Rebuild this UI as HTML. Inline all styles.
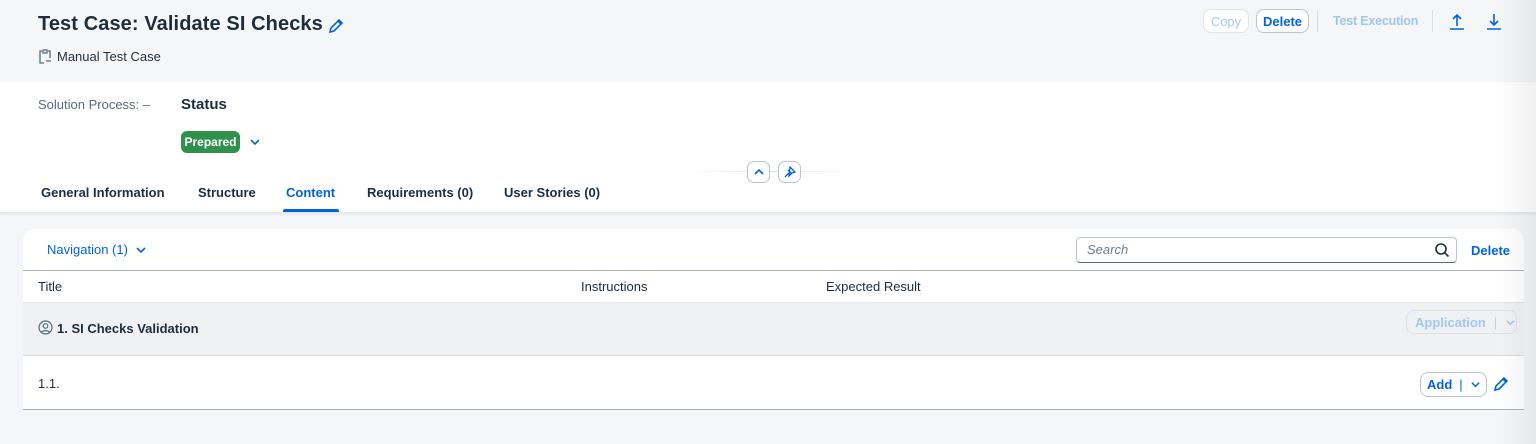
<!DOCTYPE html>
<html><head><style>
*{box-sizing:border-box;margin:0;padding:0}
body{width:1536px;height:444px;overflow:hidden;background:#f5f6f7;font-family:"Liberation Sans",sans-serif;color:#1d2d3e;position:relative}
.a{position:absolute;white-space:nowrap}
.btn{position:absolute;height:24px;border:1px solid #bcc3ca;border-radius:8px;background:#fff;font-size:13px;font-weight:bold;color:#0a6ed1;display:flex;align-items:center;justify-content:center}
</style></head><body>
<div class="a" style="left:0;top:82px;width:1536px;height:130px;background:#fff;box-shadow:0 2px 3px rgba(0,0,0,.08)"></div>
<div class="a" style="left:38px;top:13px;font-size:20px;font-weight:bold;letter-spacing:0.1px">Test Case: Validate SI Checks</div>
<svg class="a" style="left:327px;top:17px" width="18" height="18" viewBox="0 0 18 18"><path d="M3 15l1-4 8-8 3 3-8 8z M11 4l3 3" fill="none" stroke="#0064d9" stroke-width="1.6"/></svg>
<svg class="a" style="left:38px;top:48px" width="14" height="16" viewBox="0 0 14 16"><path d="M4 3H2v12h4M10 3h2v7M5 2h4v3H5z M8 13h5" fill="none" stroke="#556b82" stroke-width="1.3"/></svg>
<div class="a" style="left:57px;top:49px;font-size:13px">Manual Test Case</div>
<div class="btn" style="left:1203px;top:9px;width:46px;color:#a3c8ef;border-color:#e0e4e8;font-weight:normal">Copy</div>
<div class="btn" style="left:1256px;top:9px;width:53px;color:#0064d9">Delete</div>
<div class="a" style="left:1317px;top:10px;width:1px;height:22px;background:#d9dde1"></div>
<div class="a" style="left:1333px;top:14px;font-size:12.5px;font-weight:bold;color:#9fc6ef;letter-spacing:-0.2px">Test Execution</div>
<div class="a" style="left:1432px;top:10px;width:1px;height:22px;background:#d9dde1"></div>
<svg class="a" style="left:1448px;top:12px" width="18" height="18" viewBox="0 0 18 18"><path d="M9 14V3M5 7l4-4 4 4M2 17h14" fill="none" stroke="#0064d9" stroke-width="1.6"/></svg>
<svg class="a" style="left:1485px;top:12px" width="18" height="18" viewBox="0 0 18 18"><path d="M9 2v11M5 9l4 4 4-4M2 17h14" fill="none" stroke="#0064d9" stroke-width="1.6"/></svg>
<div class="a" style="left:38px;top:97px;font-size:13px;color:#556b82">Solution Process: –</div>
<div class="a" style="left:181px;top:96px;font-size:15px;font-weight:bold">Status</div>
<div class="a" style="left:181px;top:131px;width:59px;height:22px;border-radius:6px;background:#30914c;color:#fff;font-size:12px;font-weight:bold;text-align:center;line-height:22px">Prepared</div>
<svg class="a" style="left:249px;top:137px" width="12" height="10" viewBox="0 0 12 10"><path d="M2 3l4 4 4-4" fill="none" stroke="#0064d9" stroke-width="1.6"/></svg>
<div class="a" style="left:690px;top:171px;width:160px;height:1px;background:linear-gradient(90deg,transparent,#d9dde1,transparent)"></div>
<div class="btn" style="left:747px;top:161px;width:23px;height:22px;border-radius:7px"><svg width="12" height="10" viewBox="0 0 12 10"><path d="M2 7l4-4 4 4" fill="none" stroke="#0064d9" stroke-width="1.6"/></svg></div>
<div class="btn" style="left:778px;top:161px;width:23px;height:22px;border-radius:7px"><svg width="12" height="12" viewBox="0 0 12 12"><path d="M1 11l4-4M4 4l4 4M6 1l5 5-3 1-3 3z" fill="none" stroke="#0064d9" stroke-width="1.3"/></svg></div>
<div class="a" style="left:41px;top:185px;font-size:13px;font-weight:bold">General Information</div>
<div class="a" style="left:198px;top:185px;font-size:13px;font-weight:bold">Structure</div>
<div class="a" style="left:286px;top:185px;font-size:13px;font-weight:bold;color:#0064d9">Content</div>
<div class="a" style="left:283px;top:209px;width:56px;height:3px;background:#0064d9;border-radius:2px 2px 0 0"></div>
<div class="a" style="left:367px;top:185px;font-size:13px;font-weight:bold">Requirements (0)</div>
<div class="a" style="left:504px;top:185px;font-size:13px;font-weight:bold">User Stories (0)</div>
<div class="a" style="left:23px;top:229px;width:1501px;height:181px;background:#fff;border-radius:12px 12px 0 0;overflow:hidden">
 <div class="a" style="left:24px;top:13px;font-size:13px;color:#0064d9">Navigation (1)</div>
 <svg class="a" style="left:112px;top:16px" width="12" height="10" viewBox="0 0 12 10"><path d="M2 3l4 4 4-4" fill="none" stroke="#0064d9" stroke-width="1.6"/></svg>
 <div class="a" style="left:1053px;top:8px;width:381px;height:26px;border:1px solid #bcc3ca;border-bottom-color:#556b82;border-radius:4px"></div>
 <div class="a" style="left:1064px;top:13px;font-size:13px;font-style:italic;color:#6a7d90">Search</div>
 <svg class="a" style="left:1411px;top:13px" width="16" height="16" viewBox="0 0 16 16"><circle cx="7" cy="7" r="5" fill="none" stroke="#1d2d3e" stroke-width="1.6"/><path d="M10.5 10.5l4 4" stroke="#1d2d3e" stroke-width="1.6"/></svg>
 <div class="a" style="left:1448px;top:14px;font-size:13px;font-weight:bold;color:#0064d9">Delete</div>
 <div class="a" style="left:0;top:41px;width:1501px;height:1px;background:#a8b2bd"></div>
 <div class="a" style="left:15px;top:50px;font-size:13px">Title</div>
 <div class="a" style="left:558px;top:50px;font-size:13px">Instructions</div>
 <div class="a" style="left:803px;top:50px;font-size:13px">Expected Result</div>
 <div class="a" style="left:0;top:73px;width:1501px;height:54px;background:#eff1f2;border-top:1px solid #e5e5e5;border-bottom:1px solid #d9dde1"></div>
 <svg class="a" style="left:15px;top:91px" width="15" height="15" viewBox="0 0 15 15"><circle cx="7.5" cy="7.5" r="6.5" fill="none" stroke="#556b82" stroke-width="1.2"/><circle cx="7.5" cy="6" r="2.3" fill="none" stroke="#556b82" stroke-width="1.2"/><path d="M3.5 12.5c1-2.5 7-2.5 8 0" fill="none" stroke="#556b82" stroke-width="1.2"/></svg>
 <div class="a" style="left:34px;top:92px;font-size:13px;font-weight:bold">1. SI Checks Validation</div>
 <div class="btn" style="left:1383px;top:81px;width:111px;height:24px;border-color:#dfe3e7;background:#eff1f2;color:#a3c8ef;justify-content:flex-start;padding-left:8px">Application<span style="margin:0 8px;color:#b7d2ef;font-weight:normal">|</span><svg width="11" height="9" viewBox="0 0 12 10"><path d="M2 3l4 4 4-4" fill="none" stroke="#a3c8ef" stroke-width="1.6"/></svg></div>
 <div class="a" style="left:15px;top:147px;font-size:13px">1.1.</div>
 <div class="btn" style="left:1397px;top:143px;width:67px;height:25px;color:#0064d9;justify-content:flex-start;padding-left:6px">Add<span style="margin:0 7px;font-weight:normal">|</span><svg width="11" height="9" viewBox="0 0 12 10"><path d="M2 3l4 4 4-4" fill="none" stroke="#0064d9" stroke-width="1.6"/></svg></div>
 <svg class="a" style="left:1469px;top:146px" width="18" height="18" viewBox="0 0 18 18"><path d="M3 15l1-4 8-8 3 3-8 8z M11 4l3 3" fill="none" stroke="#0064d9" stroke-width="1.6"/></svg>
 <div class="a" style="left:0;top:180px;width:1501px;height:1px;background:#a8b2bd"></div>
</div>
<div class="a" style="left:1500px;top:0;width:36px;height:444px;background:linear-gradient(90deg,rgba(0,0,0,0),rgba(0,0,0,.06))"></div>
</body></html>
